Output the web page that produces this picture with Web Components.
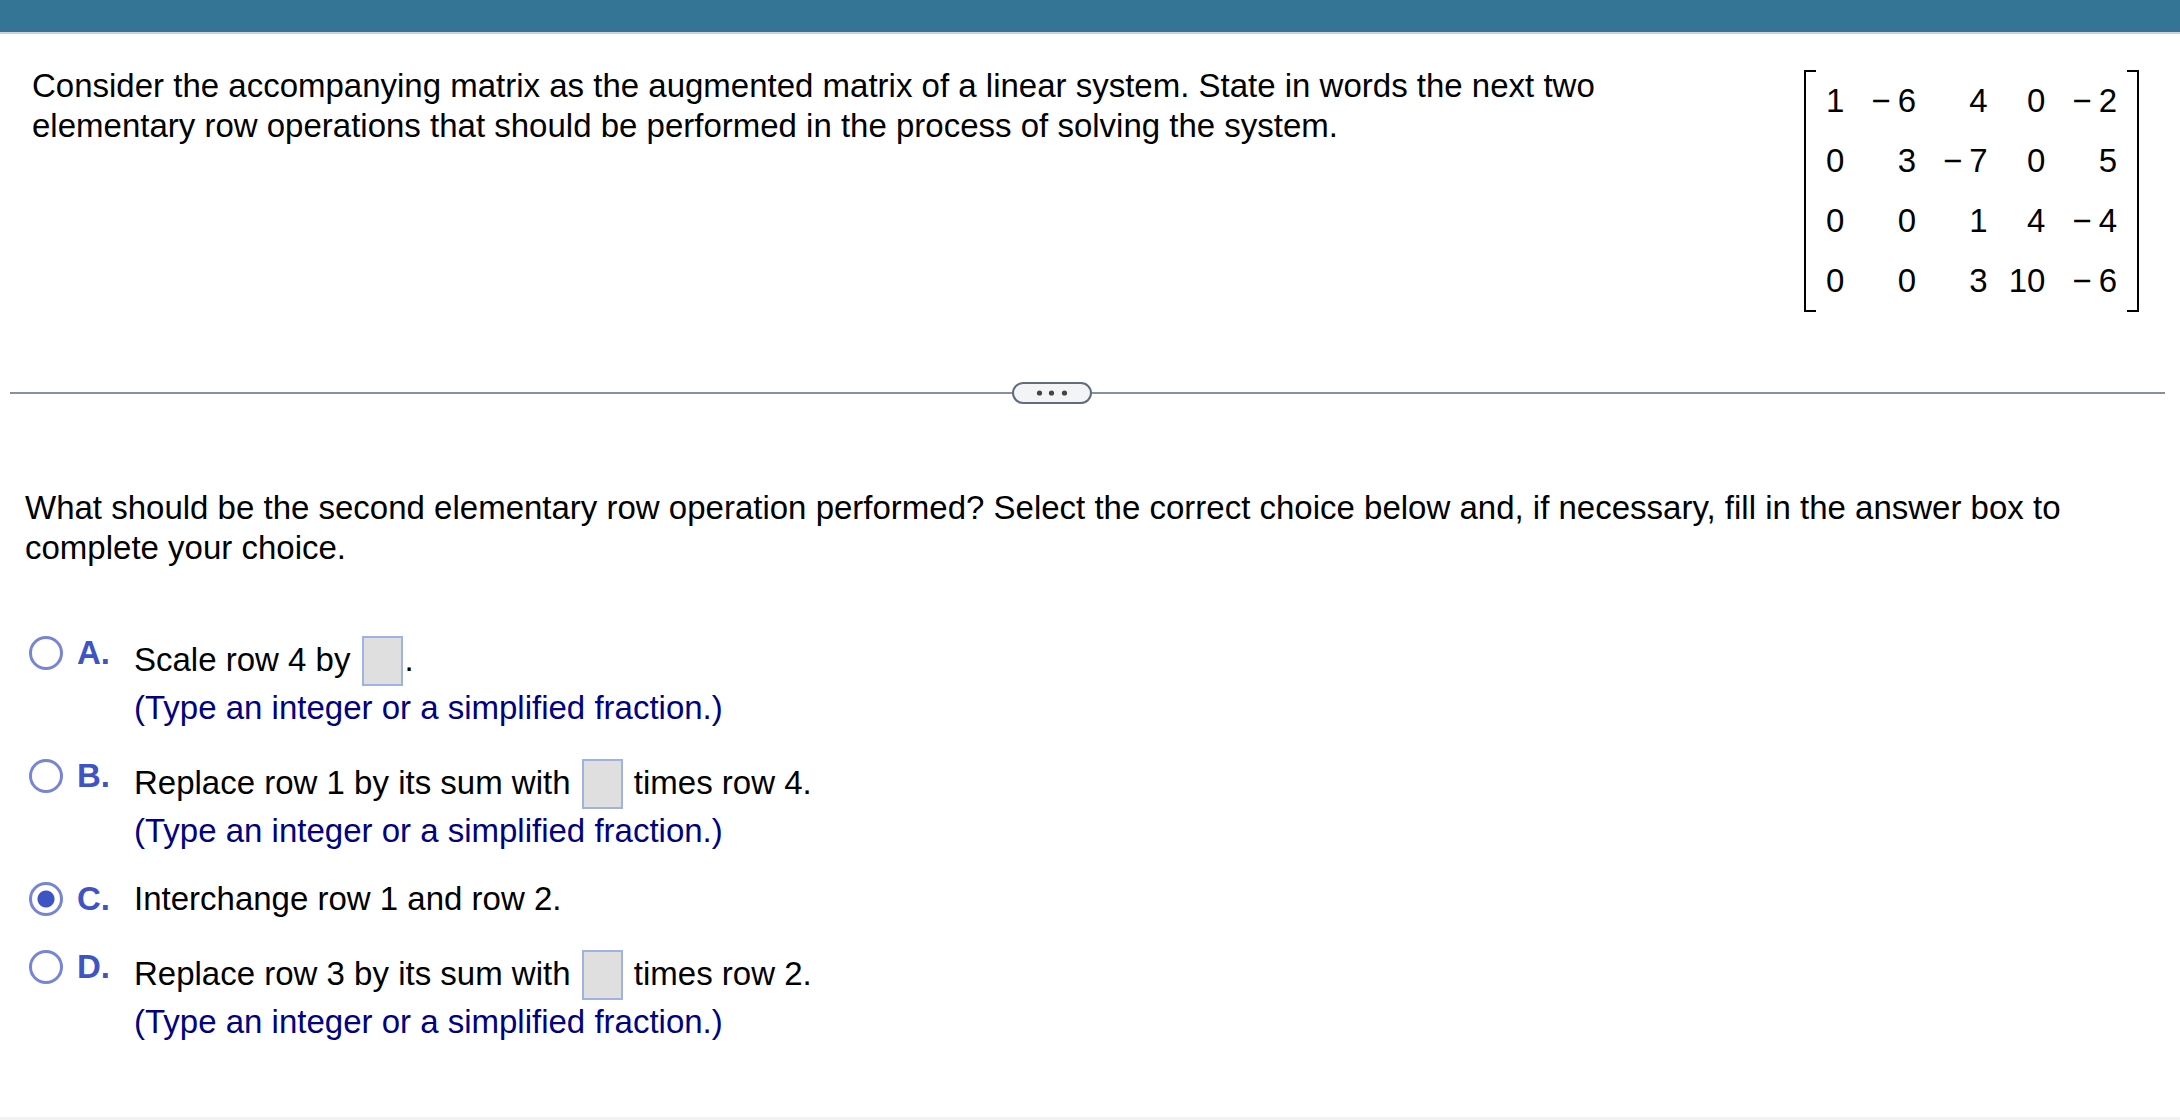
<!DOCTYPE html>
<html lang="en">
<head>
<meta charset="utf-8">
<title>Elementary row operations</title>
<style>
  body { margin: 0; background: #fff; color: #000; font-family: "Liberation Sans", Arial, sans-serif; font-size: 33px; line-height: 40px; }
</style>
</head>
<body>
<exercise-page></exercise-page>

<template id="page-template">
  <style>
    :host { display: flex; flex-direction: column; min-height: 100vh; box-sizing: border-box; border-bottom: 3px solid #f2f2f2; }
    header { height: 32px; background: #347596; border-bottom: 2px solid #cfd2dc; }
    p { margin: 0; }
    .problem { display: flex; justify-content: space-between; align-items: flex-start; gap: 190px; padding: 32px 41px 70px 32px; }
    .problem p { max-width: 1580px; }
    augmented-matrix { margin-top: 4px; }
    .question { padding: 84px 25px 65px; }
    form { display: flex; flex-direction: column; gap: 28px; padding: 0 29px; }
  </style>
  <header></header>
  <main>
    <section class="problem">
      <p>Consider the accompanying matrix as the augmented matrix of a linear system. State in words the next two elementary row operations that should be performed in the process of solving the system.</p>
      <augmented-matrix rows="1 -6 4 0 -2; 0 3 -7 0 5; 0 0 1 4 -4; 0 0 3 10 -6"></augmented-matrix>
    </section>
    <pane-divider></pane-divider>
    <p class="question">What should be the second elementary row operation performed? Select the correct choice below and, if necessary, fill in the answer box to complete your choice.</p>
    <form>
      <answer-choice letter="A." hint="(Type an integer or a simplified fraction.)">Scale row 4 by <answer-box name="Scale factor for row 4"></answer-box>.</answer-choice>
      <answer-choice letter="B." hint="(Type an integer or a simplified fraction.)">Replace row 1 by its sum with <answer-box name="Multiple of row 4"></answer-box> times row 4.</answer-choice>
      <answer-choice letter="C." checked>Interchange row 1 and row 2.</answer-choice>
      <answer-choice letter="D." hint="(Type an integer or a simplified fraction.)">Replace row 3 by its sum with <answer-box name="Multiple of row 2"></answer-box> times row 2.</answer-choice>
    </form>
  </main>
</template>

<template id="matrix-template">
  <style>
    :host { display: flex; flex: none; }
    .bracket { width: 10px; border: 2px solid #000; }
    .left { border-right: 0; }
    .right { border-left: 0; }
    table { border-collapse: collapse; margin: 1px 10px; }
    td { padding: 0 0 0 21px; height: 60px; text-align: right; white-space: nowrap; }
    td:first-child { padding-left: 0; }
    .minus { margin: 0 7px 0 6px; }
  </style>
  <div class="bracket left"></div>
  <table><tbody></tbody></table>
  <div class="bracket right"></div>
</template>

<template id="divider-template">
  <style>
    :host { display: flex; align-items: center; padding: 0 15px 0 10px; }
    .line { height: 2px; background: #8890a0; }
    .before { flex: 14; }
    .after { flex: 15; }
    button { display: flex; align-items: center; justify-content: center; box-sizing: border-box; width: 80px; height: 22px; padding: 0; border: 2px solid #616d7b; border-radius: 11px; background: #f2f4f6; }
    svg { display: block; }
  </style>
  <div class="line before"></div>
  <button type="button" aria-label="Resize panes">
    <svg width="32" height="6" viewBox="0 0 32 6" fill="#444"><circle cx="3.5" cy="3" r="2.6"/><circle cx="15.5" cy="3" r="2.6"/><circle cx="28.5" cy="3" r="2.6"/></svg>
  </button>
  <div class="line after"></div>
</template>

<template id="choice-template">
  <style>
    :host { display: flex; align-items: flex-start; }
    input { appearance: none; flex: none; box-sizing: border-box; width: 34px; height: 34px; margin: 3px 14px 3px 0; border: 3px solid #7685d5; border-radius: 50%; background: #fff; }
    input:checked { background: radial-gradient(circle, #3f54c4 8px, #fff 9px); }
    .letter { flex: none; width: 57px; color: #3f54c4; font-weight: bold; }
    .body { display: flex; flex-direction: column; }
    :host([hint]) .text { line-height: 53px; padding-bottom: 2px; }
    .hint { color: #000080; }
  </style>
  <input type="radio" id="choice">
  <label class="letter" for="choice"></label>
  <div class="body">
    <label class="text" for="choice"><slot></slot></label>
  </div>
</template>

<template id="box-template"><style>
    :host { display: inline; }
    input { box-sizing: border-box; width: 41px; height: 50px; margin: 0 2px; padding: 0 2px 2px; border: 2px solid #a0b1e4; border-radius: 0; background: #dfdfdf; font: inherit; line-height: 40px; text-align: center; outline: 0; }
  </style><input type="text"></template>

<script>
  class TemplateElement extends HTMLElement {
    constructor() {
      super();
      this.attachShadow({ mode: "open" });
      const template = document.getElementById(this.constructor.template);
      this.shadowRoot.append(template.content.cloneNode(true));
    }
  }

  class ExercisePage extends TemplateElement {
    static template = "page-template";
    constructor() {
      super();
      // Radios live in separate shadow roots, so exclusivity is kept here.
      this.shadowRoot.addEventListener("choice-selected", (event) => {
        for (const choice of this.shadowRoot.querySelectorAll("answer-choice")) {
          if (choice !== event.target) choice.removeAttribute("checked");
        }
      });
    }
  }

  class AugmentedMatrix extends TemplateElement {
    static template = "matrix-template";
    connectedCallback() {
      const body = this.shadowRoot.querySelector("tbody");
      body.replaceChildren();
      for (const line of this.getAttribute("rows").split(";")) {
        const row = body.insertRow();
        for (const value of line.trim().split(" ")) {
          const cell = row.insertCell();
          if (value.startsWith("-")) {
            const minus = document.createElement("span");
            minus.className = "minus";
            minus.textContent = "\u2212";
            cell.append(minus, value.slice(1));
          } else {
            cell.textContent = value;
          }
        }
      }
    }
  }

  class PaneDivider extends TemplateElement {
    static template = "divider-template";
  }

  class AnswerChoice extends TemplateElement {
    static template = "choice-template";
    static observedAttributes = ["checked"];
    connectedCallback() {
      const root = this.shadowRoot;
      root.querySelector(".letter").textContent = this.getAttribute("letter");
      if (this.hasAttribute("hint") && !root.querySelector(".hint")) {
        const hint = document.createElement("div");
        hint.className = "hint";
        hint.textContent = this.getAttribute("hint");
        root.querySelector(".body").append(hint);
      }
      root.querySelector("input").addEventListener("change", () => {
        this.setAttribute("checked", "");
        this.dispatchEvent(new CustomEvent("choice-selected", { bubbles: true }));
      });
    }
    attributeChangedCallback() {
      this.shadowRoot.querySelector("input").checked = this.hasAttribute("checked");
    }
  }

  class AnswerBox extends TemplateElement {
    static template = "box-template";
    connectedCallback() {
      this.shadowRoot.querySelector("input").setAttribute("aria-label", this.getAttribute("name"));
    }
  }

  customElements.define("answer-box", AnswerBox);
  customElements.define("answer-choice", AnswerChoice);
  customElements.define("pane-divider", PaneDivider);
  customElements.define("augmented-matrix", AugmentedMatrix);
  customElements.define("exercise-page", ExercisePage);
</script>
</body>
</html>
